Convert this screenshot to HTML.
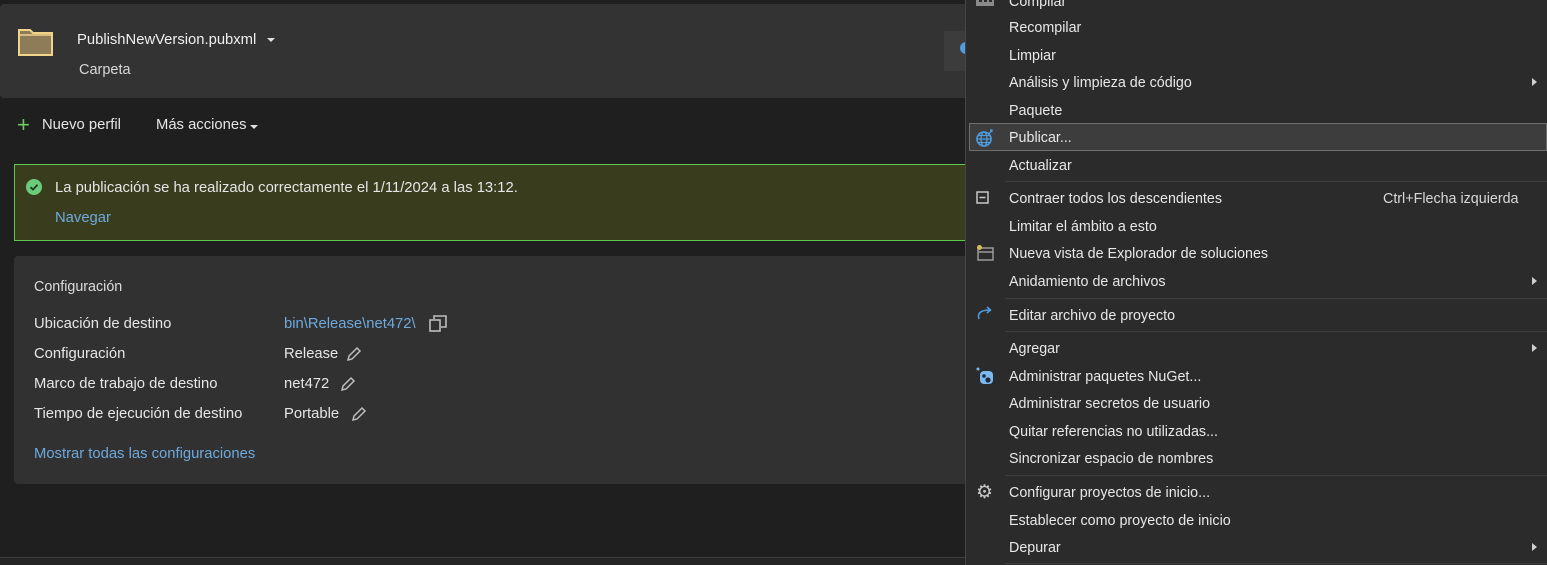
<!DOCTYPE html>
<html><head><meta charset="utf-8"><style>
*{box-sizing:border-box;margin:0;padding:0}
body{width:1547px;height:565px;background:#1f1f1f;font-family:"Segoe UI","Liberation Sans",sans-serif;color:#e6e6e6;position:relative;overflow:hidden;font-size:14px}
.a{position:absolute;white-space:nowrap}
.l{font-size:14.8px}
.menu{position:absolute;left:965px;top:0;width:582px;height:565px;background:#2b2b2b;border-left:1px solid #454545}
.mi{position:absolute;left:43px;font-size:14.3px;color:#e8e8e8;line-height:20px}
.sep{position:absolute;left:39px;right:0;height:1px;background:#3e3e3e}
.arr{position:absolute;left:566px;width:0;height:0;border-top:4px solid transparent;border-bottom:4px solid transparent;border-left:5px solid #cfcfcf}
.ico{position:absolute;left:10px}
.link{color:#6ea9dd}
</style></head><body>
<div class="a" style="left:0;top:4px;width:980px;height:94px;background:#333333;border-radius:4px"></div>
<svg class="a" style="left:18px;top:28px" width="36" height="29" viewBox="0 0 36 29"><path d="M1 2 H12 L15 5 H34 V27 H1 Z" fill="#8e7b57" stroke="#f0d48a" stroke-width="2"/><path d="M1 7 H34" stroke="#f0d48a" stroke-width="1.5"/></svg>
<div class="a l" style="left:77px;top:32px;color:#f0f0f0">PublishNewVersion.pubxml</div>
<div class="a" style="left:267px;top:38px;border-left:4px solid transparent;border-right:4px solid transparent;border-top:4px solid #e0e0e0"></div>
<div class="a" style="left:79px;top:62px;font-size:14.5px;color:#d8d8d8">Carpeta</div>
<div class="a" style="left:944px;top:31px;width:22px;height:40px;background:#3c3c3c"></div>
<div class="a" style="left:960px;top:42px;width:6px;height:12px;border-radius:6px 0 0 6px;background:#4f9ce0"></div>

<div class="a" style="left:17px;top:117px;font-size:22px;color:#6ccb5f;line-height:16px;font-weight:300">+</div>
<div class="a l" style="left:42px;top:117px">Nuevo perfil</div>
<div class="a l" style="left:156px;top:117px">Más acciones</div>
<div class="a" style="left:250px;top:125px;border-left:4px solid transparent;border-right:4px solid transparent;border-top:4px solid #e0e0e0"></div>

<div class="a" style="left:14px;top:164px;width:980px;height:77px;background:#393d1e;border:1px solid #5fc84f"></div>
<svg class="a" style="left:26px;top:179px" width="16" height="16"><circle cx="8" cy="8" r="8" fill="#6ccb7a"/><path d="M4.5 8.2 L7 10.6 L11.5 5.8" stroke="#1f3a1f" stroke-width="1.8" fill="none"/></svg>
<div class="a l" style="left:55px;top:180px">La publicación se ha realizado correctamente el 1/11/2024 a las 13:12.</div>
<div class="a link l" style="left:55px;top:210px">Navegar</div>

<div class="a" style="left:14px;top:256px;width:980px;height:228px;background:#313131;border-radius:4px"></div>
<div class="a" style="left:34px;top:279px;font-size:14.3px;color:#dcdcdc">Configuración</div>
<div class="a l" style="left:34px;top:316px">Ubicación de destino</div>
<div class="a l" style="left:34px;top:346px">Configuración</div>
<div class="a l" style="left:34px;top:376px">Marco de trabajo de destino</div>
<div class="a l" style="left:34px;top:406px">Tiempo de ejecución de destino</div>
<div class="a link l" style="left:284px;top:316px">bin\Release\net472\</div>
<svg class="a" style="left:429px;top:315px" width="19" height="18"><rect x="1" y="5" width="10" height="11" fill="none" stroke="#bdbdbd" stroke-width="1.6"/><path d="M5 4 V1 H17 V12 H12" fill="none" stroke="#bdbdbd" stroke-width="1.6"/></svg>
<div class="a l" style="left:284px;top:346px">Release</div>
<div class="a l" style="left:284px;top:376px">net472</div>
<div class="a l" style="left:284px;top:406px">Portable</div>
<svg class="a" style="left:346px;top:346px" width="16" height="16"><path d="M2 14 L3 10 L11 2 L14 5 L6 13 Z" fill="none" stroke="#bdbdbd" stroke-width="1.5"/></svg>
<svg class="a" style="left:340px;top:376px" width="16" height="16"><path d="M2 14 L3 10 L11 2 L14 5 L6 13 Z" fill="none" stroke="#bdbdbd" stroke-width="1.5"/></svg>
<svg class="a" style="left:351px;top:406px" width="16" height="16"><path d="M2 14 L3 10 L11 2 L14 5 L6 13 Z" fill="none" stroke="#bdbdbd" stroke-width="1.5"/></svg>
<div class="a link l" style="left:34px;top:446px">Mostrar todas las configuraciones</div>
<div class="a" style="left:0;top:557px;width:965px;height:1px;background:#3d3d3d"></div>
<div class="a" style="left:0;top:558px;width:965px;height:7px;background:#252525"></div>

<div class="menu">
<svg class="ico" style="top:-4px" width="18" height="12"><rect x="0" y="0" width="18" height="10" fill="#8a8a8a"/><rect x="3" y="3" width="3" height="3" fill="#2b2b2b"/><rect x="8" y="3" width="3" height="3" fill="#2b2b2b"/><rect x="13" y="3" width="3" height="3" fill="#2b2b2b"/></svg>
<div class="mi" style="top:-8px">Compilar</div>
<div class="mi" style="top:18px">Recompilar</div>
<div class="mi" style="top:46px">Limpiar</div>
<div class="mi" style="top:73px">Análisis y limpieza de código</div><div class="arr" style="top:78px"></div>
<div class="mi" style="top:101px">Paquete</div>
<div style="position:absolute;left:3px;right:0;top:123px;height:28px;background:#3d3d3d;border:1px solid #6e6e6e"></div>
<svg class="ico" style="top:129px" width="18" height="18"><circle cx="8" cy="10" r="7" fill="none" stroke="#4f9ce0" stroke-width="1.6"/><ellipse cx="8" cy="10" rx="3" ry="7" fill="none" stroke="#4f9ce0" stroke-width="1.3"/><path d="M1 10 H15 M2 6.5 H14 M2 13.5 H14" stroke="#4f9ce0" stroke-width="1.2"/><path d="M13 5 L16 1 M14 1 H16 V3" stroke="#4f9ce0" stroke-width="1.3" fill="none"/></svg>
<div class="mi" style="top:128px">Publicar...</div>
<div class="mi" style="top:156px">Actualizar</div>
<div class="sep" style="top:181px"></div>
<svg class="ico" style="top:191px" width="14" height="14"><rect x="1" y="1" width="11" height="11" fill="none" stroke="#c8c8c8" stroke-width="1.5"/><path d="M3.5 6.5 H9.5" stroke="#c8c8c8" stroke-width="1.5"/></svg>
<div class="mi" style="top:189px">Contraer todos los descendientes</div>
<div class="mi" style="top:189px;left:417px;color:#d8d8d8">Ctrl+Flecha izquierda</div>
<div class="mi" style="top:217px">Limitar el ámbito a esto</div>
<svg class="ico" style="top:244px" width="18" height="18"><rect x="2" y="4" width="15" height="12" fill="none" stroke="#9a9a9a" stroke-width="1.5"/><path d="M2 8 H17" stroke="#9a9a9a" stroke-width="1.5"/><circle cx="3.5" cy="3.5" r="2.5" fill="#d8b85a"/></svg>
<div class="mi" style="top:244px">Nueva vista de Explorador de soluciones</div>
<div class="mi" style="top:272px">Anidamiento de archivos</div><div class="arr" style="top:277px"></div>
<div class="sep" style="top:298px"></div>
<svg class="ico" style="top:305px" width="18" height="16"><path d="M3 14 C1 8 5 5 14 5 M11 2 L14.5 5 L11 8" fill="none" stroke="#4f9ce0" stroke-width="1.6"/></svg>
<div class="mi" style="top:306px">Editar archivo de proyecto</div>
<div class="sep" style="top:331px"></div>
<div class="mi" style="top:339px">Agregar</div><div class="arr" style="top:344px"></div>
<svg class="ico" style="top:367px" width="18" height="18"><circle cx="2" cy="2" r="1.5" fill="#79b8f0"/><rect x="4" y="4" width="13" height="13" rx="4" fill="#79b8f0"/><circle cx="8" cy="9" r="1.8" fill="#1e2a3a"/><circle cx="12" cy="13" r="2.6" fill="#1e2a3a"/></svg>
<div class="mi" style="top:367px">Administrar paquetes NuGet...</div>
<div class="mi" style="top:394px">Administrar secretos de usuario</div>
<div class="mi" style="top:422px">Quitar referencias no utilizadas...</div>
<div class="mi" style="top:449px">Sincronizar espacio de nombres</div>
<div class="sep" style="top:475px"></div>
<div class="ico" style="top:481px;font-size:19px;color:#c8c8c8">⚙</div>
<div class="mi" style="top:483px">Configurar proyectos de inicio...</div>
<div class="mi" style="top:511px">Establecer como proyecto de inicio</div>
<div class="mi" style="top:538px">Depurar</div><div class="arr" style="top:543px"></div>
<div class="sep" style="top:563px"></div>
</div>
</body></html>
